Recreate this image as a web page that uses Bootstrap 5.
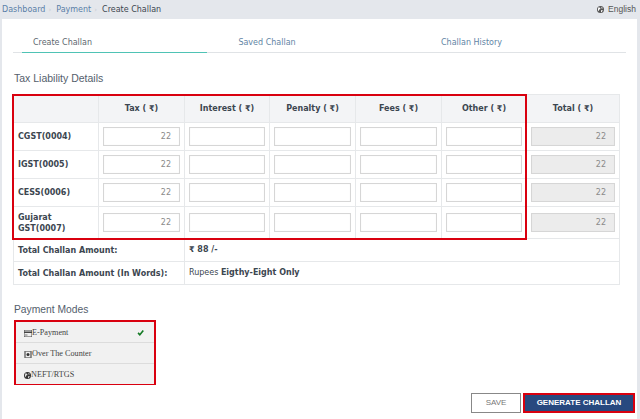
<!DOCTYPE html>
<html lang="en">
<head>
<meta charset="utf-8">
<title>Create Challan</title>
<link href="https://cdn.jsdelivr.net/npm/bootstrap@5.3.0/dist/css/bootstrap.min.css" rel="stylesheet">
<style>
html,body{height:419px;overflow:hidden}
body{background:#e4e7ec;font-family:"DejaVu Sans",sans-serif;font-size:8px;color:#3c4650}
.topbar{height:19px;padding:0 4px 0 2px;font-size:8px;line-height:19px}
.topbar a{color:#5a7fa8;text-decoration:none}
.crumbsep{color:#c8ccd2;margin:0 5px 0 3px;font-size:7px}
.lang{font-family:"Liberation Sans",sans-serif;font-size:8.5px;color:#555}
.sheet{background:#fff;margin:0 3px 0 2px;height:400px;padding:0 1px 0 11px}
.tabrow{margin-right:10px;height:34px;border-bottom:1px solid #e0e3e6}
.tabitem{font-size:8px;line-height:1;color:#5f85a5;text-decoration:none;height:34px;padding-top:20px;text-align:center}
.tabone{width:185px;margin-left:9px;border-bottom:1px solid #4fc3b5;color:#5d6770;padding-right:104px}
.tabtwo{width:203px;padding-right:83px}
.tabthree{width:210px;padding-right:87px}
.sect{font-family:"Liberation Sans",sans-serif;font-size:10.5px;color:#54606c;line-height:12px;margin:0;padding-left:1px}
.sect1{padding-top:19px;height:41px}
.gridwrap{width:606px}
.taxgrid{table-layout:fixed;width:606px;margin:0;border-color:#e6e8ea;font-size:8px}
.taxgrid th,.taxgrid td{padding:0;vertical-align:middle;border-color:#e6e8ea;color:#3c4650}
.taxgrid thead th{height:28px;background:#f3f4f6;text-align:center;font-weight:700}
.taxgrid tbody th{padding-left:4px;font-weight:700;line-height:11px;text-align:left}
.taxgrid tbody td{padding:0 4px}
.taxgrid .r1{height:28px}
.taxgrid .r2{height:32px}
.taxgrid .r3{height:23px}
.amt{display:block;width:100%;height:19px;border:1px solid #d6d6d6;border-radius:0;background:#fff;padding:0 8px 0 4px;font-family:"DejaVu Sans",sans-serif;font-size:8px;color:#8a8a8a;text-align:right;box-shadow:inset 0 0 1px #e4e4e4}
.amt[disabled]{background:#ececec;opacity:1}
.redframe{position:absolute;left:-1px;top:0;width:515px;height:146px;border:2px solid #d9000f;pointer-events:none}
.sect2{padding-top:19px;height:35px;font-size:10.3px}
.modes{width:142px;height:65px;border:2px solid #d9000f;border-radius:0;margin-left:1px;background:#f1f1f1;font-family:"Liberation Serif",serif;font-size:8.2px;color:#444}
.modes .list-group-item{background:#f1f1f1;height:21px;padding:2px 10px 0 8px;border-color:#dcdcdc;border-width:0 0 1px;color:#444;border-radius:0;line-height:18px}
.modes .list-group-item:last-child{border-bottom:0}
.actions{margin-top:8px;padding-right:1px}
.savebtn,.genbtn{height:20px;border-radius:0;padding:0;font-family:"Liberation Sans",sans-serif;font-size:8px;line-height:1}
.savebtn{width:50px;background:#fff;border:1px solid #888;color:#777;margin-right:2px}
.genbtn{width:112px;background:#28497f;border:2px solid #d9000f;color:#fff;font-weight:700}
</style>
</head>
<body>
<div class="topbar d-flex justify-content-between">
  <div><a href="#">Dashboard</a><span class="crumbsep">›</span><a href="#">Payment</a><span class="crumbsep">›</span><span>Create Challan</span></div>
  <div class="lang d-flex align-items-center gap-1">
    <svg width="7" height="7" viewBox="0 0 16 16"><circle cx="8" cy="8" r="8" fill="#555"/><path d="M3 3l4 1 1 3-3 1-1 4-2-3zM10 2l3 2-1 2-2-1zM10 9l3 0-2 5-2-1z" fill="#fff"/></svg>
    <span>English</span>
  </div>
</div>
<div class="sheet">
  <div class="tabrow d-flex">
    <a href="#" class="tabitem tabone">Create Challan</a>
    <a href="#" class="tabitem tabtwo">Saved Challan</a>
    <a href="#" class="tabitem tabthree">Challan History</a>
  </div>
  <h2 class="sect sect1">Tax Liability Details</h2>
  <div class="gridwrap position-relative">
    <table class="table table-bordered taxgrid">
      <colgroup><col style="width:85px"><col style="width:86px"><col style="width:85px"><col style="width:86px"><col style="width:86px"><col style="width:85px"><col style="width:93px"></colgroup>
      <thead><tr><th></th><th>Tax ( ₹)</th><th>Interest ( ₹)</th><th>Penalty ( ₹)</th><th>Fees ( ₹)</th><th>Other ( ₹)</th><th>Total ( ₹)</th></tr></thead>
      <tbody>
        <tr class="r1"><th>CGST(0004)</th><td><input class="amt" value="22"></td><td><input class="amt"></td><td><input class="amt"></td><td><input class="amt"></td><td><input class="amt"></td><td><input class="amt" value="22" disabled></td></tr>
        <tr class="r1"><th>IGST(0005)</th><td><input class="amt" value="22"></td><td><input class="amt"></td><td><input class="amt"></td><td><input class="amt"></td><td><input class="amt"></td><td><input class="amt" value="22" disabled></td></tr>
        <tr class="r1"><th>CESS(0006)</th><td><input class="amt" value="22"></td><td><input class="amt"></td><td><input class="amt"></td><td><input class="amt"></td><td><input class="amt"></td><td><input class="amt" value="22" disabled></td></tr>
        <tr class="r2"><th>Gujarat<br>GST(0007)</th><td><input class="amt" value="22"></td><td><input class="amt"></td><td><input class="amt"></td><td><input class="amt"></td><td><input class="amt"></td><td><input class="amt" value="22" disabled></td></tr>
        <tr class="r3"><th colspan="2">Total Challan Amount:</th><td colspan="5"><b>₹ 88 /-</b></td></tr>
        <tr class="r3"><th colspan="2">Total Challan Amount (In Words):</th><td colspan="5">Rupees <b>Eigthy-Eight Only</b></td></tr>
      </tbody>
    </table>
    <div class="redframe"></div>
  </div>
  <h2 class="sect sect2">Payment Modes</h2>
  <ul class="list-group modes">
    <li class="list-group-item d-flex align-items-center">
      <svg width="8" height="7" viewBox="0 0 16 14"><rect x=".5" y=".5" width="15" height="13" fill="#eee" stroke="#444"/><rect y="3" width="16" height="3" fill="#444"/><rect x="2" y="9" width="5" height="2" fill="#777"/></svg>
      <span class="flex-grow-1">E-Payment</span>
      <svg width="7" height="6" viewBox="0 0 16 14"><path d="M1 8l2.500-3 3 3L13 0l3 2.500L6.500 14z" fill="#137a24"/></svg>
    </li>
    <li class="list-group-item d-flex align-items-center">
      <svg width="8" height="7" viewBox="0 0 16 14"><rect x=".5" y="1.500" width="15" height="11" fill="#eee" stroke="#333"/><circle cx="8" cy="7" r="3" fill="#333"/><path d="M3 1v12M13 1v12" stroke="#333"/></svg>
      <span>Over The Counter</span>
    </li>
    <li class="list-group-item d-flex align-items-center">
      <svg width="7" height="7" viewBox="0 0 16 16"><circle cx="8" cy="8" r="8" fill="#333"/><path d="M3 3l4 1 1 3-3 1-1 4-2-3zM10 2l3 2-1 2-2-1zM10 9l3 0-2 5-2-1z" fill="#ddd"/></svg>
      <span>NEFT/RTGS</span>
    </li>
  </ul>
  <div class="actions d-flex justify-content-end">
    <button type="button" class="btn savebtn">SAVE</button>
    <button type="button" class="btn genbtn">GENERATE CHALLAN</button>
  </div>
</div>
<script src="https://cdn.jsdelivr.net/npm/bootstrap@5.3.0/dist/js/bootstrap.bundle.min.js"></script>
</body>
</html>
